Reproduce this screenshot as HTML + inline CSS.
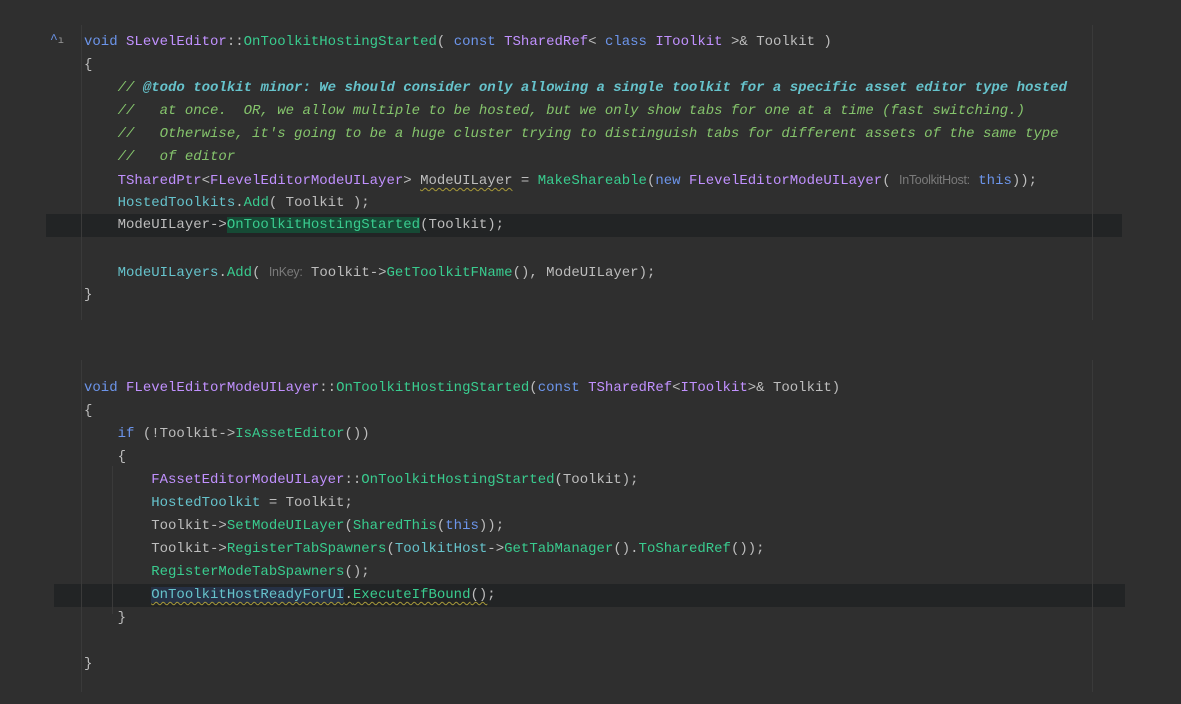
<!DOCTYPE html>
<html><head><meta charset="utf-8"><style>
body{margin:0;width:1181px;height:704px;background:#2f2f2f;overflow:hidden;position:relative;font-family:"Liberation Mono",monospace;font-size:14px;color:#bdbdbd}
.l{position:absolute;left:84px;white-space:pre;height:23px;line-height:23px}
.hl{position:absolute;background:#222425;height:23px}
.vl{position:absolute;width:1px;background:#3a3a3a}
.k{color:#6c95eb}.t{color:#c191ff}.f{color:#39cc8f}.v{color:#66c3cc}
.c{color:#85c46c;font-style:italic}.td{color:#66c3cc;font-style:italic;font-weight:bold}
.h{font-family:"Liberation Sans",sans-serif;font-size:12.5px;color:#7a7a7a;letter-spacing:-0.3px}
.sq{text-decoration:underline wavy #a89a3a;text-decoration-thickness:1px;text-underline-offset:3px}
.m{background:#164a35}
</style></head><body>
<div class="hl" style="left:46px;top:214px;width:1076px"></div>
<div class="hl" style="left:54px;top:584px;width:1071px"></div>
<div class="vl" style="left:81px;top:25px;height:295px"></div>
<div class="vl" style="left:1092px;top:25px;height:295px"></div>
<div class="vl" style="left:81px;top:360px;height:332px"></div>
<div class="vl" style="left:1092px;top:360px;height:332px"></div>
<div class="vl" style="left:112px;top:466px;height:148px"></div>
<div style="position:absolute;left:50px;top:32px;color:#6c95eb;font-size:13px">^<span style="color:#999;font-size:10px">ı</span></div>

<div class="l" style="top:31px"><span class="k">void</span> <span class="t">SLevelEditor</span>::<span class="f">OnToolkitHostingStarted</span>( <span class="k">const</span> <span class="t">TSharedRef</span>&lt; <span class="k">class</span> <span class="t">IToolkit</span> &gt;&amp; Toolkit )</div>
<div class="l" style="top:54px">{</div>
<div class="l" style="top:77px">    <span class="c">// </span><span class="td">@todo toolkit minor: We should consider only allowing a single toolkit for a specific asset editor type hosted</span></div>
<div class="l" style="top:100px">    <span class="c">//   at once.  OR, we allow multiple to be hosted, but we only show tabs for one at a time (fast switching.)</span></div>
<div class="l" style="top:123px">    <span class="c">//   Otherwise, it's going to be a huge cluster trying to distinguish tabs for different assets of the same type</span></div>
<div class="l" style="top:146px">    <span class="c">//   of editor</span></div>
<div class="l" style="top:169px">    <span class="t">TSharedPtr</span>&lt;<span class="t">FLevelEditorModeUILayer</span>&gt; <span class="sq">ModeUILayer</span> = <span class="f">MakeShareable</span>(<span class="k">new</span> <span class="t">FLevelEditorModeUILayer</span>( <span class="h">InToolkitHost:</span> <span class="k">this</span>));</div>
<div class="l" style="top:192px">    <span class="v">HostedToolkits</span>.<span class="f">Add</span>( Toolkit );</div>
<div class="l" style="top:214px">    ModeUILayer-&gt;<span class="f m">OnToolkitHostingStarted</span>(Toolkit);</div>
<div class="l" style="top:261px">    <span class="v">ModeUILayers</span>.<span class="f">Add</span>( <span class="h">InKey:</span> Toolkit-&gt;<span class="f">GetToolkitFName</span>(), ModeUILayer);</div>
<div class="l" style="top:284px">}</div>

<div class="l" style="top:377px"><span class="k">void</span> <span class="t">FLevelEditorModeUILayer</span>::<span class="f">OnToolkitHostingStarted</span>(<span class="k">const</span> <span class="t">TSharedRef</span>&lt;<span class="t">IToolkit</span>&gt;&amp; Toolkit)</div>
<div class="l" style="top:400px">{</div>
<div class="l" style="top:423px">    <span class="k">if</span> (!Toolkit-&gt;<span class="f">IsAssetEditor</span>())</div>
<div class="l" style="top:446px">    {</div>
<div class="l" style="top:469px">        <span class="t">FAssetEditorModeUILayer</span>::<span class="f">OnToolkitHostingStarted</span>(Toolkit);</div>
<div class="l" style="top:492px">        <span class="v">HostedToolkit</span> = Toolkit;</div>
<div class="l" style="top:515px">        Toolkit-&gt;<span class="f">SetModeUILayer</span>(<span class="f">SharedThis</span>(<span class="k">this</span>));</div>
<div class="l" style="top:538px">        Toolkit-&gt;<span class="f">RegisterTabSpawners</span>(<span class="v">ToolkitHost</span>-&gt;<span class="f">GetTabManager</span>().<span class="f">ToSharedRef</span>());</div>
<div class="l" style="top:561px">        <span class="f">RegisterModeTabSpawners</span>();</div>
<div class="l" style="top:584px">        <span class="sq"><span class="v" style="background:#263145">OnToolkitHostReadyForUI</span>.<span class="f">ExecuteIfBound</span>()</span>;</div>
<div class="l" style="top:607px">    }</div>
<div class="l" style="top:653px">}</div>
</body></html>
